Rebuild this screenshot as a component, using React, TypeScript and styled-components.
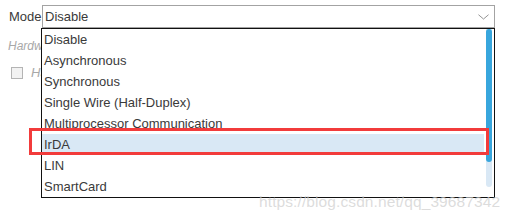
import styled, { createGlobalStyle } from "styled-components";

const GlobalStyle = createGlobalStyle`
  html, body {
    margin: 0;
    padding: 0;
    background: #ffffff;
  }
  body {
    font-family: "Liberation Sans", Arial, sans-serif;
    font-size: 13px;
    color: #3a3a3a;
  }
`;

const modes = [
  "Disable",
  "Asynchronous",
  "Synchronous",
  "Single Wire (Half-Duplex)",
  "Multiprocessor Communication",
  "IrDA",
  "LIN",
  "SmartCard",
];

export default function App() {
  const selected = "IrDA";
  return (
    <>
      <GlobalStyle />
      <Panel>
        <ModeRow>
          <Label>Mode</Label>
          <Select>
            <SelectValue>Disable</SelectValue>
            <Chevron viewBox="0 0 12 6" width="11" height="6">
              <path d="M0.5 0.5 L6 5.2 L11.5 0.5" fill="none" stroke="#8a8a8a" strokeWidth="1" />
            </Chevron>
          </Select>
        </ModeRow>

        {/* the open list covers the rest of these labels */}
        <HiddenColumn>
          <SectionTitle>Hardware Flow Control (RS232)</SectionTitle>
          <CheckRow>
            <CheckBox />
            <CheckLabel>Hardware Flow Control (RS485)</CheckLabel>
          </CheckRow>
        </HiddenColumn>

        <DropList>
          <Options>
            {modes.map((m) => (
              <Option key={m} $active={m === selected}>
                {m}
              </Option>
            ))}
          </Options>
          <ScrollTrack>
            <ScrollThumb />
          </ScrollTrack>
        </DropList>

        <Marker />
        <Watermark>https://blog.csdn.net/qq_39687342</Watermark>
      </Panel>
    </>
  );
}

const Panel = styled.div`
  position: relative;
  width: 512px;
  height: 220px;
  overflow: hidden;
  padding: 5px 0 0 8px;
  box-sizing: border-box;
`;

const ModeRow = styled.div`
  display: flex;
  align-items: center;
  gap: 1px;
  width: 487px;
`;

const Label = styled.span`
  width: 33px;
  padding-left: 1px;
  box-sizing: border-box;
  color: #3a3a3a;
`;

const Select = styled.div`
  flex: 1;
  height: 23px;
  box-sizing: border-box;
  border: 1px solid #a3a3a3;
  display: flex;
  align-items: center;
  justify-content: space-between;
  padding: 0 5px 0 2px;
`;

const SelectValue = styled.span`
  color: #3a3a3a;
`;

const Chevron = styled.svg`
  display: block;
  margin-top: 1px;
`;

const HiddenColumn = styled.div`
  width: 33px;
  overflow: hidden;
`;

const SectionTitle = styled.div`
  margin-top: 11px;
  font-style: italic;
  font-size: 12px;
  color: #a8a8a8;
  white-space: nowrap;
`;

const CheckRow = styled.div`
  display: flex;
  align-items: center;
  gap: 8px;
  margin-top: 12px;
  padding-left: 3px;
`;

const CheckBox = styled.span`
  flex: none;
  width: 10px;
  height: 10px;
  border: 1px solid #b4b4b4;
  background: #f2f2f2;
`;

const CheckLabel = styled.span`
  font-style: italic;
  font-size: 13px;
  color: #a8a8a8;
  white-space: nowrap;
`;

const DropList = styled.div`
  position: absolute;
  left: 41px;
  top: 28px;
  width: 454px;
  height: 170px;
  box-sizing: border-box;
  border: 1px solid #111;
  border-top-width: 1.5px;
  background: #fff;
  display: flex;
`;

const Options = styled.div`
  flex: 1;
  display: flex;
  flex-direction: column;
`;

const Option = styled.div<{ $active?: boolean }>`
  height: 21px;
  line-height: 21px;
  padding-left: 2px;
  color: #3a3a3a;
  background: ${(p) => (p.$active ? "#d9e8f5" : "transparent")};
  white-space: nowrap;
`;

const ScrollTrack = styled.div`
  width: 6px;
  margin: 0 2px 10px 2px;
  background: #d9e8f5;
  border-radius: 0 0 3px 3px;
  display: flex;
  flex-direction: column;
`;

const ScrollThumb = styled.div`
  height: 133px;
  background: #38a6dd;
  border-radius: 3px;
`;

const Marker = styled.div`
  position: absolute;
  left: 29px;
  top: 128px;
  width: 460px;
  height: 27px;
  box-sizing: border-box;
  border: 3px solid #f23b3b;
  pointer-events: none;
`;

const Watermark = styled.div`
  position: absolute;
  left: 259px;
  top: 193px;
  font-size: 15.5px;
  color: rgba(205, 205, 205, 0.7);
  white-space: nowrap;
  letter-spacing: 0.1px;
`;
